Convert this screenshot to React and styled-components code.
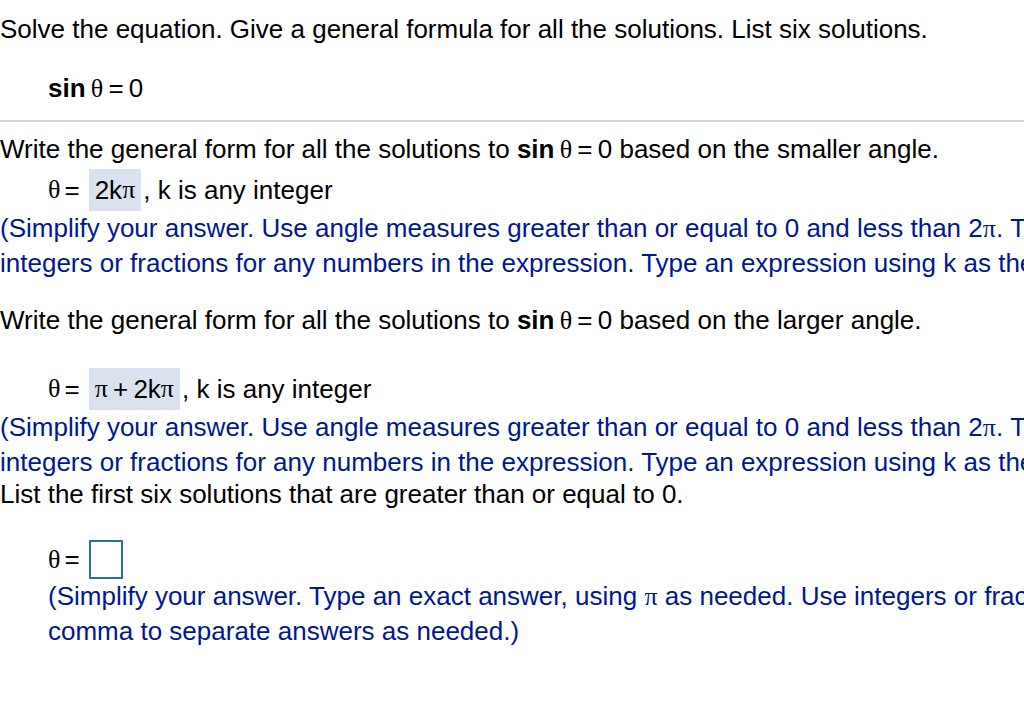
import styled, { createGlobalStyle } from "styled-components";

const Global = createGlobalStyle`
body {
    margin: 0;
    background: #ffffff;
    overflow: hidden;
}
`
const Page = styled.div`
width: 1024px;
height: 702px;
overflow: hidden;
padding-top: 12px;
font-family: "Liberation Sans", Arial, sans-serif;
font-size: 26px;
color: #000;
box-sizing: border-box;
`
const Line = styled.div`
white-space: nowrap;
overflow: hidden;
line-height: ${( { lh } ) => lh || 34}px;
margin-top: ${( { top } ) => top || 0}px;
padding-left: ${( { indent } ) => indent ? 48 : 0}px;
`
const Hint = styled( Line )`
color: #00188f;
`
const Rule = styled.hr`
border: none;
height: 2px;
background: #d3d6e2;
margin: 14px 0 0;
`
const Sym = styled.span`
font-family: "Liberation Serif", "Times New Roman", serif;
`
const Bold = styled.b`
font-weight: 700;
`
const AnswerRow = styled.div`
display: flex;
align-items: center;
padding-left: 48px;
height: ${( { h } ) => h}px;
margin-top: ${( { top } ) => top}px;
white-space: nowrap;
`
const Eq = styled.span`
margin: 0 9px 0 4px;
`
const Filled = styled.span`
display: flex;
align-items: center;
height: 42px;
padding: 0 6px;
background: #dae2ef;
margin-right: 2px;
`
const Blank = styled.span`
width: 30px;
height: 35px;
border: 2px solid #2f6f8f;
`

const Equation = () => (
    <>
        <Bold>sin</Bold>&thinsp;<Sym>θ</Sym>&thinsp;=&thinsp;0
    </>
)

const App = () => {
    return (
        <>
            <Global />
            <Page>
                <Line>Solve the equation. Give a general formula for all the solutions. List six solutions.</Line>
                <Line indent top={25}><Equation /></Line>
                <Rule />
                <Line top={10}>Write the general form for all the solutions to <Equation /> based on the smaller angle.</Line>
                <AnswerRow h={42} top={2}>
                    <Sym>θ</Sym><Eq>=</Eq>
                    <Filled>2k<Sym>π</Sym></Filled>, k is any integer
                </AnswerRow>
                <Hint>(Simplify your answer. Use angle measures greater than or equal to 0 and less than 2<Sym>π</Sym>. T</Hint>
                <Hint>integers or fractions for any numbers in the expression. Type an expression using k as the</Hint>
                <Line top={23}>Write the general form for all the solutions to <Equation /> based on the larger angle.</Line>
                <AnswerRow h={42} top={30}>
                    <Sym>θ</Sym><Eq>=</Eq>
                    <Filled><Sym>π</Sym>&thinsp;+&thinsp;2k<Sym>π</Sym></Filled>, k is any integer
                </AnswerRow>
                <Hint>(Simplify your answer. Use angle measures greater than or equal to 0 and less than 2<Sym>π</Sym>. T</Hint>
                <Hint>integers or fractions for any numbers in the expression. Type an expression using k as the</Hint>
                <Line lh={30}>List the first six solutions that are greater than or equal to 0.</Line>
                <AnswerRow h={39} top={31}>
                    <Sym>θ</Sym><Eq>=</Eq>
                    <Blank />
                </AnswerRow>
                <Hint indent>(Simplify your answer. Type an exact answer, using <Sym>π</Sym> as needed. Use integers or frac</Hint>
                <Hint indent>comma to separate answers as needed.)</Hint>
            </Page>
        </>
    )
}
export default App;
